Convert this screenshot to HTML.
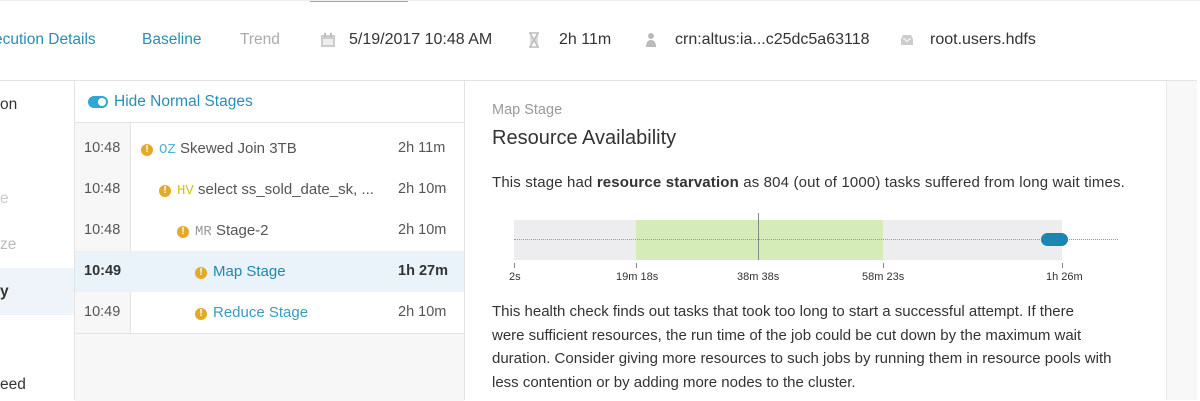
<!DOCTYPE html>
<html><head><meta charset="utf-8"><style>
body{margin:0;width:1200px;height:400px;overflow:hidden;background:#fff;font-family:"Liberation Sans",sans-serif;position:relative;color:#333}
.a{position:absolute;white-space:nowrap}
.mono{font-family:"Liberation Mono",monospace;font-size:14px}
.ex{display:inline-block;width:12px;height:12px;border-radius:50%;background:#e4a92a;color:#fff;font-size:10px;font-weight:bold;text-align:center;line-height:12px;vertical-align:1px;margin-right:6px}
.t{font-size:14.5px;color:#555}
.n{font-size:15px;color:#555}
.h{font-size:15.5px}
</style></head><body>
<div class="a" style="left:310px;top:0;width:98px;height:2px;background:#5cc0e0"></div>
<div class="a" style="left:0;top:0;width:1200px;height:1px;background:#eee"></div>
<div class="a h" style="left:-6px;top:31px;color:#2a8db5">ecution Details</div>
<div class="a h" style="left:142px;top:31px;color:#2a8db5">Baseline</div>
<div class="a h" style="left:240px;top:31px;color:#aaa">Trend</div>
<svg class="a" style="left:320px;top:32px" width="16" height="16"><rect x="1" y="3" width="14" height="12" fill="#ccc"/><rect x="3" y="7" width="10" height="6" fill="#eee"/><rect x="4" y="1" width="2" height="4" fill="#bbb"/><rect x="10" y="1" width="2" height="4" fill="#bbb"/></svg>
<div class="a" style="left:349px;top:31px;font-size:16px;color:#333">5/19/2017 10:48 AM</div>
<svg class="a" style="left:528px;top:32px" width="12" height="16"><path d="M1 1H11M1 15H11M2 1L6 8L2 15M10 1L6 8L10 15" stroke="#bbb" stroke-width="1.5" fill="#ddd"/></svg>
<div class="a" style="left:559px;top:31px;font-size:16px;color:#333">2h 11m</div>
<svg class="a" style="left:645px;top:32px" width="12" height="16"><circle cx="6" cy="4" r="3" fill="#bbb"/><path d="M1 15Q1 8 6 8Q11 8 11 15Z" fill="#bbb"/></svg>
<div class="a" style="left:675px;top:31px;font-size:16px;color:#333">crn:altus:ia...c25dc5a63118</div>
<svg class="a" style="left:900px;top:34px" width="14" height="12"><path d="M1 5L3 1H11L13 5V11H1Z" fill="#ccc"/><path d="M3 5H5L6 7H8L9 5H11" stroke="#fff" fill="none"/></svg>
<div class="a" style="left:930px;top:31px;font-size:16px;color:#333">root.users.hdfs</div>
<div class="a" style="left:0;top:80px;width:1197px;height:1px;background:#e3e3e3"></div>
<div class="a" style="left:1196px;top:80px;width:1px;height:320px;background:#e3e3e3"></div>
<div class="a" style="left:1166px;top:81px;width:30px;height:319px;background:#f8f8f8;border-left:1px solid #e8e8e8"></div>
<div class="a" style="left:0;top:268px;width:74px;height:47px;background:#eef4f9"></div>
<div class="a h" style="left:0;top:96px;color:#333">on</div>
<div class="a h" style="left:0;top:190px;color:#ccc">e</div>
<div class="a h" style="left:0;top:236px;color:#bbb">ze</div>
<div class="a h" style="left:0;top:283px;font-weight:bold;color:#333">y</div>
<div class="a h" style="left:0;top:376px;color:#333">eed</div>
<div class="a" style="left:74px;top:81px;width:1px;height:319px;background:#e3e3e3"></div>
<div class="a" style="left:464px;top:81px;width:1px;height:319px;background:#e3e3e3"></div>
<svg class="a" style="left:88px;top:96px" width="20" height="12"><rect width="20" height="12" rx="6" fill="#2ea7d4"/><circle cx="14" cy="6" r="4" fill="#fff"/></svg>
<div class="a h" style="left:114px;top:93px;color:#2a8db5">Hide Normal Stages</div>
<div class="a" style="left:75px;top:122px;width:389px;height:1px;background:#e3e3e3"></div>
<div class="a" style="left:75px;top:123px;width:55px;height:210px;background:#f7f7f7"></div>
<div class="a" style="left:130px;top:123px;width:1px;height:210px;background:#e3e3e3"></div>
<div class="a" style="left:75px;top:251px;width:389px;height:41px;background:#eaf3f9"></div>
<div class="a" style="left:75px;top:333px;width:389px;height:67px;background:#f7f7f7;border-top:1px solid #e3e3e3"></div>
<div class="a t" style="left:84px;top:140px">10:48</div>
<div class="a t" style="left:84px;top:181px">10:48</div>
<div class="a t" style="left:84px;top:222px">10:48</div>
<div class="a t" style="left:84px;top:263px;font-weight:bold;color:#333">10:49</div>
<div class="a t" style="left:84px;top:304px">10:49</div>
<div class="a n" style="left:141px;top:140px"><span class="ex">!</span><span class="mono" style="color:#52b3d9">OZ</span> Skewed Join 3TB</div>
<div class="a n" style="left:159px;top:181px"><span class="ex">!</span><span class="mono" style="color:#d9c21a">HV</span> select ss_sold_date_sk, ...</div>
<div class="a n" style="left:177px;top:222px"><span class="ex">!</span><span class="mono" style="color:#999">MR</span> Stage-2</div>
<div class="a n" style="left:195px;top:263px;color:#1f87b0"><span class="ex">!</span>Map Stage</div>
<div class="a n" style="left:195px;top:304px;color:#3a9cc4"><span class="ex">!</span>Reduce Stage</div>
<div class="a t" style="left:398px;top:140px">2h 11m</div>
<div class="a t" style="left:398px;top:181px">2h 10m</div>
<div class="a t" style="left:398px;top:222px">2h 10m</div>
<div class="a t" style="left:398px;top:263px;font-weight:bold;color:#333">1h 27m</div>
<div class="a t" style="left:398px;top:304px">2h 10m</div>
<div class="a" style="left:492px;top:102px;font-size:14.5px;color:#999">Map Stage</div>
<div class="a" style="left:492px;top:127px;font-size:20px;color:#333">Resource Availability</div>
<div class="a" style="left:492px;top:174px;font-size:15px;letter-spacing:0.15px;color:#333">This stage had <b>resource starvation</b> as 804 (out of 1000) tasks suffered from long wait times.</div>
<div class="a" style="left:514px;top:220px;width:548px;height:40px;background:#ededf0"></div>
<div class="a" style="left:636px;top:220px;width:247px;height:40px;background:#d5ebb8"></div>
<div class="a" style="left:514px;top:239px;width:604px;border-top:1px dotted #999"></div>
<div class="a" style="left:758px;top:213px;width:1px;height:47px;background:#888"></div>
<div class="a" style="left:1041px;top:233px;width:27px;height:13px;border-radius:7px;background:#1b86b0"></div>
<div class="a" style="left:514px;top:263px;width:1px;height:5px;background:#888"></div>
<div class="a" style="left:636px;top:263px;width:1px;height:5px;background:#888"></div>
<div class="a" style="left:883px;top:263px;width:1px;height:5px;background:#888"></div>
<div class="a" style="left:1062px;top:263px;width:1px;height:5px;background:#888"></div>
<div class="a" style="left:509px;top:271px;font-size:11px;color:#333">2s</div>
<div class="a" style="left:616px;top:271px;font-size:11px;color:#333">19m 18s</div>
<div class="a" style="left:737px;top:271px;font-size:11px;color:#333">38m 38s</div>
<div class="a" style="left:862px;top:271px;font-size:11px;color:#333">58m 23s</div>
<div class="a" style="left:1046px;top:271px;font-size:11px;color:#333">1h 26m</div>
<div class="a" style="left:492px;top:300px;font-size:15px;color:#333;line-height:23.5px">This health check finds out tasks that took too long to start a successful attempt. If there<br>were sufficient resources, the run time of the job could be cut down by the maximum wait<br>duration. Consider giving more resources to such jobs by running them in resource pools with<br>less contention or by adding more nodes to the cluster.</div>
</body></html>
